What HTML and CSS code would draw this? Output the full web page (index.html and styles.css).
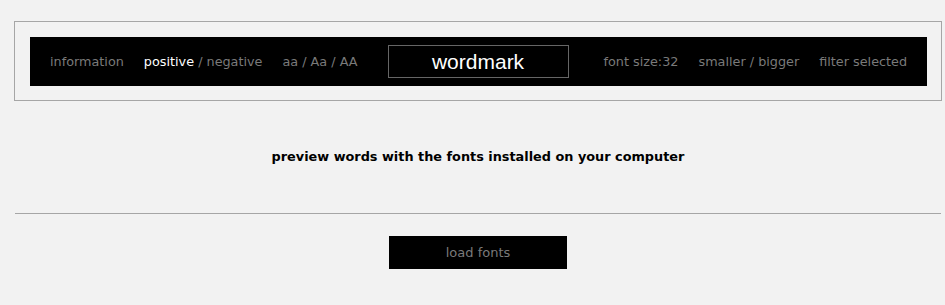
FILE: index.html
```html
<!DOCTYPE html>
<html>
<head>
<meta charset="utf-8">
<link rel="stylesheet" href="styles.css">
</head>
<body>
<div class="page">
  <div class="toolbar-frame">
    <div class="toolbar">
      <span class="link">information</span>
      <span class="group"><span class="active">positive</span> / <span class="link">negative</span></span>
      <span class="group">aa / Aa / AA</span>
      <div class="wordmark">wordmark</div>
      <span class="link">font size:32</span>
      <span class="group">smaller / bigger</span>
      <span class="link">filter selected</span>
    </div>
  </div>
  <h1 class="intro">preview words with the fonts installed on your computer</h1>
  <hr class="divider">
  <div class="actions">
    <button class="load">load fonts</button>
  </div>
</div>
</body>
</html>
```
FILE: styles.css
```css
html, body {
  margin: 0;
  padding: 0;
  background: #f2f2f2;
}
body {
  font-family: "DejaVu Sans", Verdana, sans-serif;
  font-size: 13px;
}
.page {
  padding: 21px 3px 0 14px;
}
.toolbar-frame {
  border: 1px solid #a6a6a6;
  padding: 15px 14px 14px 15px;
}
.toolbar {
  background: #000;
  height: 49px;
  display: flex;
  align-items: center;
  padding: 0 20px;
  color: #7a7a7a;
  white-space: nowrap;
  font-size: 12.8px;
}
.toolbar > * {
  margin-right: 20px;
  flex-shrink: 0;
}
.toolbar > *:last-child {
  margin-right: 0;
}
.link, .group {
  color: #7a7a7a;
}
.active {
  color: #fff;
}
.wordmark {
  box-sizing: border-box;
  width: 181px;
  height: 33px;
  border: 1px solid #666;
  color: #fff;
  font-family: "Liberation Sans", Arial, sans-serif;
  font-size: 21px;
  line-height: 31px;
  text-align: center;
  margin-left: 10px;
  margin-right: 35px !important;
}
.intro {
  margin: 48px 0 0;
  text-align: center;
  font-size: 12.85px;
  font-weight: bold;
  color: #000;
  line-height: 16px;
}
.divider {
  margin: 48px 1px 0 1px;
  border: 0;
  border-top: 1px solid #a6a6a6;
  height: 0;
}
.actions {
  display: flex;
  justify-content: center;
  padding-top: 22px;
}
.load {
  width: 178px;
  height: 33px;
  background: #000;
  border: 0;
  color: #7a7a7a;
  font-family: "DejaVu Sans", Verdana, sans-serif;
  font-size: 13px;
  padding: 0;
  cursor: pointer;
}
```
